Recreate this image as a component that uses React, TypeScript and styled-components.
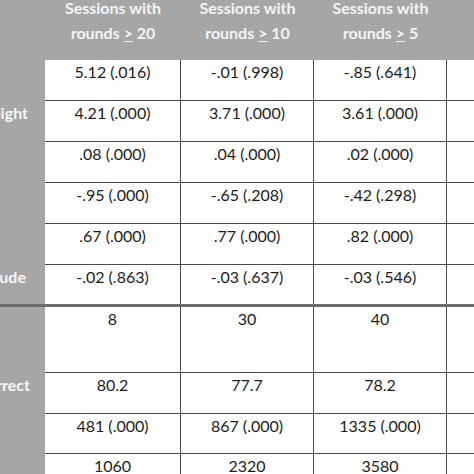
import styled, { createGlobalStyle } from 'styled-components';

const GlobalStyle = createGlobalStyle`
  html, body {
    margin: 0;
    padding: 0;
    background: #ffffff;
    overflow: hidden;
  }
  body {
    font-family: Lato, 'Liberation Sans', sans-serif;
  }
`;

const COLS = '45px 136px 133px 133px 133px';

const Sheet = styled.div`
  width: 474px;
  height: 474px;
  overflow: hidden;
`;

const Row = styled.div<{ $h: number }>`
  display: grid;
  grid-template-columns: ${COLS};
  height: ${(p) => p.$h}px;
`;

const HeadCell = styled.div`
  background: #a6a6a6;
  color: #f4f4f4;
  font-weight: 700;
  font-size: 16px;
  text-align: center;
  white-space: nowrap;

  u {
    text-underline-offset: 2px;
  }
`;

const HeadLine = styled.div`
  line-height: 15px;

  & + & {
    margin-top: 10px;
  }
`;

const Label = styled.div<{ $inset: number }>`
  background: #a6a6a6;
  color: #f6f6f6;
  font-weight: 700;
  font-size: 16px;
  line-height: 20px;
  padding-top: 2px;
  padding-right: ${(p) => p.$inset}px;
  display: flex;
  justify-content: flex-end;
  white-space: nowrap;
  overflow: hidden;
  box-sizing: border-box;
`;

const Cell = styled.div<{ $open?: boolean }>`
  background: #ffffff;
  color: #1c1c1c;
  font-size: 16px;
  line-height: 20px;
  padding-top: 2px;
  text-align: center;
  white-space: nowrap;
  border-right: 1px solid #4a4a4a;
  border-bottom: ${(p) => (p.$open ? 'none' : '1px solid #4a4a4a')};
  box-sizing: border-box;
`;

const Divider = styled.div`
  height: 3px;
  background: #6b6b6b;
`;

type DataRow = {
  label?: string;
  inset?: number;
  h: number;
  open?: boolean;
  values: string[];
};

const upper: DataRow[] = [
  { h: 41, values: ['5.12 (.016)', '-.01 (.998)', '-.85 (.641)'] },
  { label: 'Weight', inset: 17, h: 41, values: ['4.21 (.000)', '3.71 (.000)', '3.61 (.000)'] },
  { h: 41, values: ['.08 (.000)', '.04 (.000)', '.02 (.000)'] },
  { h: 41, values: ['-.95 (.000)', '-.65 (.208)', '-.42 (.298)'] },
  { h: 41, values: ['.67 (.000)', '.77 (.000)', '.82 (.000)'] },
  { label: 'Magnitude', inset: 19, h: 39, open: true, values: ['-.02 (.863)', '-.03 (.637)', '-.03 (.546)'] },
];

const lower: DataRow[] = [
  { h: 66, values: ['8', '30', '40'] },
  { label: '% Correct', inset: 15, h: 41, values: ['80.2', '77.7', '78.2'] },
  { h: 40, values: ['481 (.000)', '867 (.000)', '1335 (.000)'] },
  { h: 41, values: ['1060', '2320', '3580'] },
];

const thresholds = ['20', '10', '5'];

function renderRow(r: DataRow, i: number) {
  return (
    <Row key={i} $h={r.h}>
      <Label $inset={r.inset ?? 0}>{r.label}</Label>
      {r.values.map((v, j) => (
        <Cell key={j} $open={r.open}>
          {v}
        </Cell>
      ))}
      <Cell $open={r.open} />
    </Row>
  );
}

export default function App() {
  return (
    <Sheet>
      <GlobalStyle />
      <Row $h={60}>
        <HeadCell />
        {thresholds.map((t) => (
          <HeadCell key={t}>
            <HeadLine>Sessions with</HeadLine>
            <HeadLine>
              rounds <u>&gt;</u> {t}
            </HeadLine>
          </HeadCell>
        ))}
        <HeadCell />
      </Row>
      {upper.map(renderRow)}
      <Divider />
      {lower.map(renderRow)}
    </Sheet>
  );
}
